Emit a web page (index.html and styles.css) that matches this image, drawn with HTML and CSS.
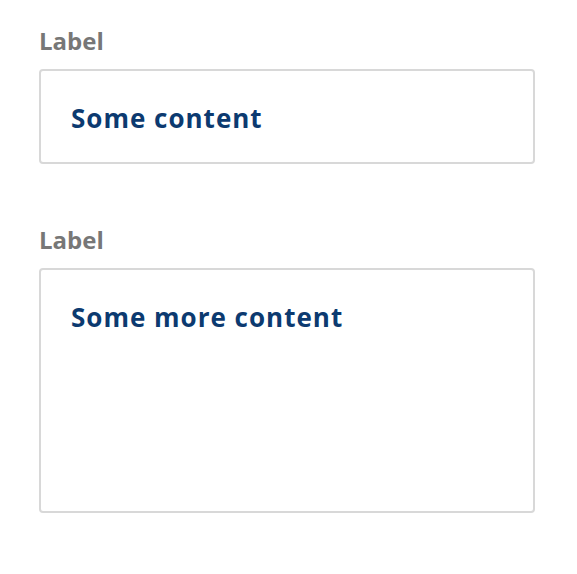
FILE: index.html
```html
<!DOCTYPE html>
<html>
<head>
<meta charset="utf-8">
<link rel="stylesheet" href="styles.css">
</head>
<body>
<div class="form">
  <div class="field">
    <div class="label">Label</div>
    <div class="box box-short"><span class="content">Some content</span></div>
  </div>
  <div class="field">
    <div class="label">Label</div>
    <div class="box box-tall"><span class="content">Some more content</span></div>
  </div>
</div>
</body>
</html>
```

FILE: styles.css
```css
html, body {
  margin: 0;
  padding: 0;
  background: #ffffff;
}
body {
  font-family: "Open Sans", "Liberation Sans", sans-serif;
}
.form {
  display: flex;
  flex-direction: column;
  gap: 60px;
  padding: 25px 42px 0 39px;
}
.field {
  display: flex;
  flex-direction: column;
  gap: 12px;
}
.label {
  font-size: 24px;
  font-weight: 700;
  color: #777777;
  line-height: 32px;
}
.box {
  border: 2px solid #d8d8d8;
  border-radius: 4px;
  padding: 29px 30px 0 30px;
  box-sizing: border-box;
}
.box-short { height: 95px; }
.box-tall { height: 245px; }
.content {
  font-size: 26px;
  font-weight: 700;
  letter-spacing: 1px;
  color: #0c3a70;
  line-height: 36px;
}
```
